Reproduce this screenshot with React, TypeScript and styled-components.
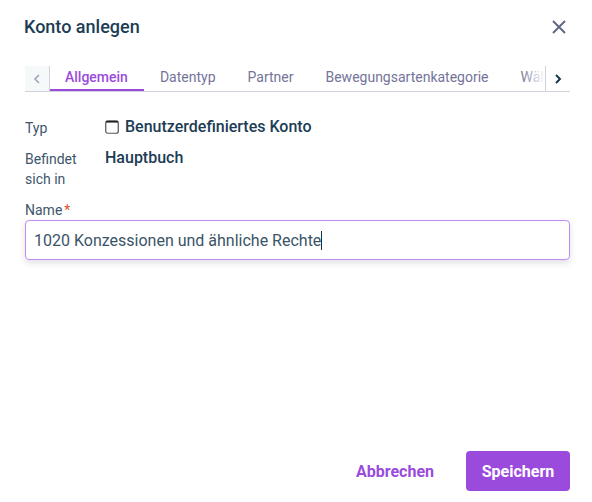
import React from 'react';
import styled, { createGlobalStyle } from 'styled-components';

const GlobalStyle = createGlobalStyle`
  html, body { margin: 0; padding: 0; background: #fff; }
  body { font-family: Roboto, "Liberation Sans", sans-serif; color: #12344d; }
`;

const Dialog = styled.div`
  width: 592px;
  height: 502px;
  box-sizing: border-box;
  padding: 16px 22px 11px 25px;
  display: flex;
  flex-direction: column;
  background: #fff;
  overflow: hidden;
`;

const Header = styled.div`
  display: flex;
  align-items: center;
  justify-content: space-between;
  height: 22px;
`;

const Title = styled.h1`
  margin: 0 0 0 -1px;
  font-size: 18px;
  line-height: 22px;
  font-weight: 500;
  color: #1c3d54;
`;

const CloseButton = styled.button`
  display: flex;
  padding: 0;
  margin-right: 4px;
  border: 0;
  background: none;
  color: #5f6586;
`;

const TabBar = styled.div`
  margin-top: 28px;
  height: 25px;
  display: flex;
  border-bottom: 1px solid #d2d0de;
`;

const ScrollButton = styled.button<{ $side: 'left' | 'right' }>`
  flex: 0 0 25px;
  height: 25px;
  padding: 0;
  display: flex;
  align-items: center;
  justify-content: center;
  border: 0;
  border-${p => (p.$side === 'left' ? 'right' : 'left')}: 1px solid #d2d0de;
  background: ${p => (p.$side === 'left' ? '#f5f9fa' : '#fff')};
  color: ${p => (p.$side === 'left' ? '#9ea5bb' : '#12344d')};
`;

const TabScroller = styled.div`
  flex: 1;
  min-width: 0;
  display: flex;
  position: relative;
  overflow: hidden;
`;

const Fade = styled.div`
  position: absolute;
  top: 0;
  right: 0;
  width: 24px;
  height: 25px;
  background: linear-gradient(to right, rgba(255, 255, 255, 0), #fff);
`;

const Tab = styled.div<{ $active?: boolean }>`
  flex: none;
  height: 25px;
  box-sizing: border-box;
  padding: 1px 16px 0 ${p => (p.$active ? 15 : 16)}px;
  font-size: 14px;
  line-height: 20px;
  font-weight: ${p => (p.$active ? 500 : 400)};
  color: ${p => (p.$active ? '#9a4bdc' : '#74749a')};
  border-bottom: 2px solid ${p => (p.$active ? '#9a4bdc' : 'transparent')};
`;

const Details = styled.div`
  margin-top: 24px;
  display: grid;
  grid-template-columns: 80px 1fr;
  row-gap: 9px;
`;

const DetailLabel = styled.div`
  width: 60px;
  font-size: 14px;
  line-height: 20px;
  color: #3d566b;
  padding-top: 2px;
`;

const DetailValue = styled.div`
  display: flex;
  align-items: flex-start;
  gap: 6px;
  padding-top: 1px;
  font-size: 16px;
  line-height: 20px;
  font-weight: 500;
  color: #1c3d54;
`;

const WindowIcon = styled.svg`
  flex: none;
  margin-top: 3px;
`;

const FieldLabel = styled.label`
  display: block;
  margin-top: 11px;
  font-size: 14px;
  line-height: 20px;
  color: #3d566b;
`;

const Required = styled.span`
  margin-left: 2px;
  color: #e0532f;
`;

const NameInput = styled.div`
  height: 40px;
  box-sizing: border-box;
  padding-left: 8px;
  display: flex;
  align-items: center;
  border: 1px solid #c08cf5;
  border-radius: 4px;
  box-shadow: 0 3px 6px rgba(60, 60, 80, 0.16);
  font-size: 16px;
  color: #3a5468;
`;

const Caret = styled.span`
  width: 1px;
  height: 19px;
  background: #12344d;
`;

const Footer = styled.div`
  margin-top: auto;
  display: flex;
  justify-content: flex-end;
  align-items: center;
  gap: 32px;
`;

const CancelButton = styled.button`
  padding: 0;
  border: 0;
  background: none;
  font: 700 16px Roboto, sans-serif;
  color: #9a4bdc;
`;

const SaveButton = styled.button`
  width: 104px;
  height: 40px;
  padding: 0;
  border: 0;
  border-radius: 4px;
  background: #9a4bdc;
  font: 700 16px Roboto, sans-serif;
  color: #fff;
`;

export default function App() {
  const tabs = ['Allgemein', 'Datentyp', 'Partner', 'Bewegungsartenkategorie', 'Währung'];
  return (
    <>
      <GlobalStyle />
      <Dialog>
        <Header>
          <Title>Konto anlegen</Title>
          <CloseButton aria-label="Schließen">
            <svg width="14" height="14" viewBox="0 0 14 14" fill="none" stroke="currentColor" strokeWidth="1.9">
              <path d="M1 1l12 12M13 1L1 13" />
            </svg>
          </CloseButton>
        </Header>
        <TabBar>
          <ScrollButton $side="left" aria-label="Zurück">
            <svg width="8" height="10" viewBox="0 0 8 10" fill="none" stroke="currentColor" strokeWidth="1.6">
              <path d="M6 1L2 5l4 4" />
            </svg>
          </ScrollButton>
          <TabScroller>
            {tabs.map((t, i) => (
              <Tab key={t} $active={i === 0}>{t}</Tab>
            ))}
            <Fade />
          </TabScroller>
          <ScrollButton $side="right" aria-label="Weiter">
            <svg width="8" height="10" viewBox="0 0 8 10" fill="none" stroke="currentColor" strokeWidth="1.9">
              <path d="M2 1l4 4-4 4" />
            </svg>
          </ScrollButton>
        </TabBar>
        <Details>
          <DetailLabel>Typ</DetailLabel>
          <DetailValue>
            <WindowIcon width="14" height="14" viewBox="0 0 14 14" fill="none">
              <rect x="0.75" y="0.75" width="12.5" height="12.5" rx="2" stroke="#555" strokeWidth="1.2" />
              <path d="M1 1.8h12" stroke="#222" strokeWidth="1.6" />
            </WindowIcon>
            Benutzerdefiniertes Konto
          </DetailValue>
          <DetailLabel>Befindet sich in</DetailLabel>
          <DetailValue>Hauptbuch</DetailValue>
        </Details>
        <FieldLabel>Name<Required>*</Required></FieldLabel>
        <NameInput>
          1020 Konzessionen und ähnliche Rechte<Caret />
        </NameInput>
        <Footer>
          <CancelButton>Abbrechen</CancelButton>
          <SaveButton>Speichern</SaveButton>
        </Footer>
      </Dialog>
    </>
  );
}
